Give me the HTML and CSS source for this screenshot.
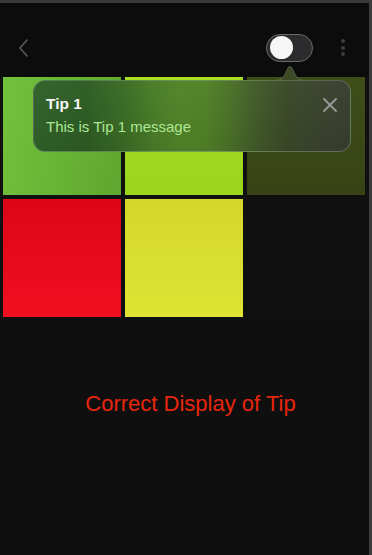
FILE: index.html
```html
<!DOCTYPE html>
<html>
<head>
<meta charset="utf-8">
<link rel="stylesheet" href="styles.css">
</head>
<body>
<div class="frame">
  <header class="header">
    <button class="back" aria-label="Back">
      <svg width="14" height="20" viewBox="0 0 14 20"><path d="M10 2 L3 10 L10 18" fill="none" stroke="#5a5a5a" stroke-width="1.6" stroke-linecap="round" stroke-linejoin="round"/></svg>
    </button>
    <div class="spacer"></div>
    <div class="toggle"><span class="knob"></span></div>
    <div class="more">
      <span class="dot"></span><span class="dot"></span><span class="dot"></span>
    </div>
  </header>
  <main class="grid">
    <div class="tile t1"></div>
    <div class="tile t2"></div>
    <div class="tile t3"></div>
    <div class="tile t4"></div>
    <div class="tile t5"></div>
  </main>
  <p class="caption">Correct Display of Tip</p>

  <svg class="caret" width="30" height="16" viewBox="0 0 30 16"><path d="M0 15.5 C6 15.5 8 13 10.5 8 L12.8 3 C13.8 1 16.2 1 17.2 3 L19.5 8 C22 13 24 15.5 30 15.5 Z" fill="#3d4a25" stroke="rgba(255,255,255,0.18)" stroke-width="1"/></svg>
  <div class="tip">
    <div class="tip-text">
      <div class="tip-title">Tip 1</div>
      <div class="tip-msg">This is Tip 1 message</div>
    </div>
    <button class="close" aria-label="Close">
      <svg width="14" height="14" viewBox="0 0 14 14"><path d="M1 1 L13 13 M13 1 L1 13" stroke="#9a9a9a" stroke-width="1.8" stroke-linecap="round"/></svg>
    </button>
  </div>
</div>
</body>
</html>
```
FILE: styles.css
```css
* { box-sizing: border-box; }
html, body { margin: 0; padding: 0; }
body {
  background: #111111;
  font-family: "Liberation Sans", Arial, sans-serif;
  width: 372px;
  height: 555px;
  overflow: hidden;
}
.frame {
  position: relative;
  width: 372px;
  height: 555px;
  border-top: 3px solid #3a3a3a;
  border-right: 3px solid #3c3c3c;
  background: linear-gradient(#111111, #0e0e0e);
}
.header {
  height: 74px;
  background: #0c0c0c;
  display: flex;
  align-items: center;
  padding: 15px 0 0 17px;
}
.back {
  background: none;
  border: 0;
  padding: 0;
  width: 14px;
  height: 20px;
  display: flex;
}
.spacer { flex: 1; }
.toggle {
  width: 47px;
  height: 28px;
  border-radius: 14px;
  background: #2c2c2e;
  border: 1.5px solid #6a6a6a;
  display: flex;
  align-items: center;
  padding-left: 2.5px;
  margin-right: 28px;
}
.knob {
  width: 23px;
  height: 23px;
  border-radius: 50%;
  background: #f6f6f6;
}
.more {
  width: 4px;
  display: flex;
  flex-direction: column;
  gap: 2.5px;
  margin-right: 24px;
}
.dot {
  width: 4px;
  height: 4px;
  border-radius: 50%;
  background: #3e3e3e;
}
.grid {
  display: grid;
  grid-template-columns: repeat(3, 118px);
  grid-auto-rows: 118px;
  gap: 4px;
  padding-left: 3px;
}
.t1 { background: linear-gradient(100deg, #72c13b, #5ea730); }
.t2 { background: linear-gradient(#a8dd22, #9ad51c); }
.t3 { background: linear-gradient(#3f4e19, #374314); }
.t4 { background: linear-gradient(#dc0616, #f00f20); }
.t5 { background: linear-gradient(#d4d72a, #dfe433); }
.caption {
  margin: 74px 0 0 0;
  padding-left: 12px;
  text-align: center;
  color: #e8260e;
  font-size: 22px;
  line-height: 26px;
}
.caret {
  position: absolute;
  left: 275px;
  top: 62px;
}
.tip {
  position: absolute;
  left: 33px;
  top: 77px;
  width: 318px;
  height: 72px;
  border-radius: 12px;
  border: 1px solid rgba(255, 255, 255, 0.2);
  background:
    linear-gradient(180deg, rgba(255,255,255,0.02), rgba(0,0,0,0.06)),
    linear-gradient(90deg, #31622a 0%, #2e5c24 16%, #3a6b25 28%, #4a7d28 38%, #528429 46%, #518228 54%, #4a7228 62%, #41592a 71%, #3b4a28 80%, #3a432d 90%, #393f30 100%);
  display: flex;
  align-items: flex-start;
  padding: 13px 12px 0 12px;
}
.tip-text { flex: 1; }
.tip-title {
  color: #f5f5f5;
  font-weight: bold;
  font-size: 15.5px;
  line-height: 20px;
}
.tip-msg {
  color: #ade694;
  font-size: 15px;
  line-height: 20px;
  margin-top: 3px;
}
.close {
  background: none;
  border: 0;
  padding: 0;
  width: 14px;
  height: 14px;
  margin-top: 4px;
  margin-right: 1px;
  display: flex;
}
```
